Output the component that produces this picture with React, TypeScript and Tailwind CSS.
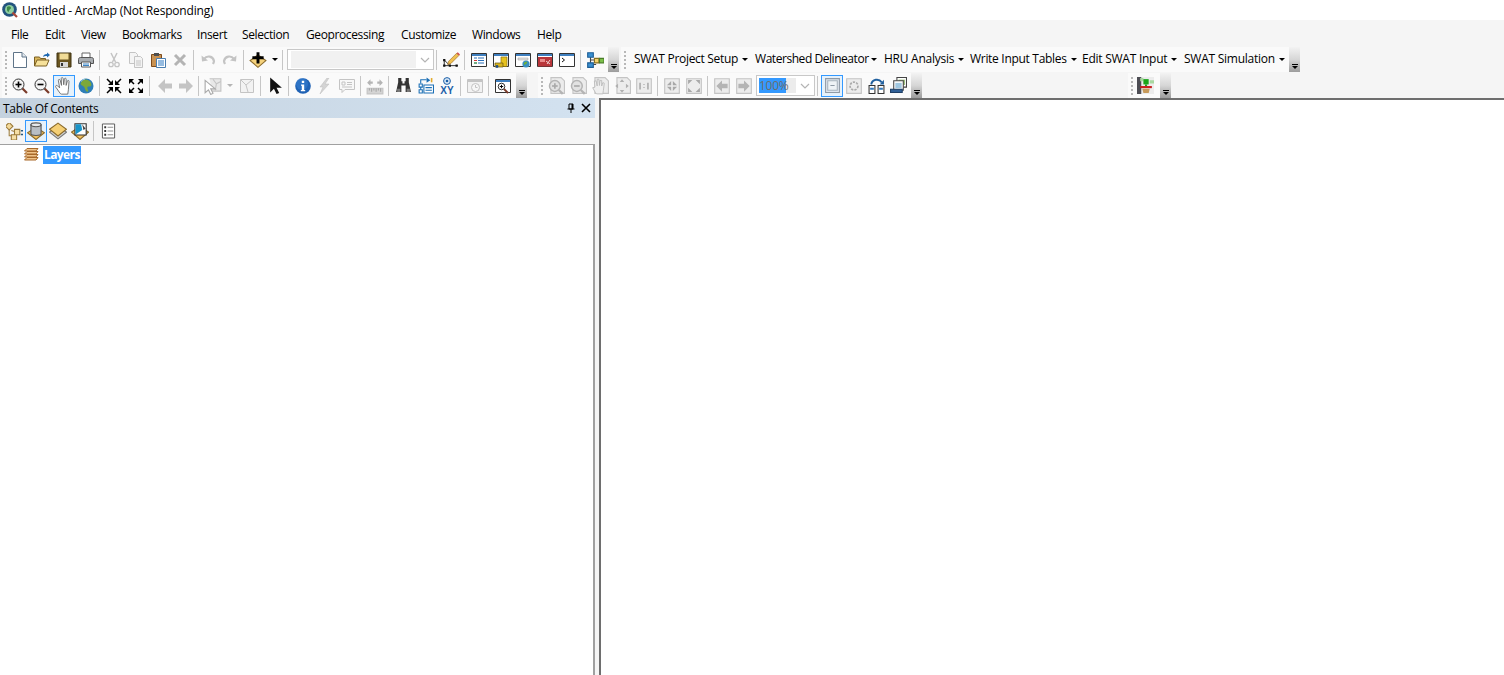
import type { ReactNode } from 'react';

const font = "font-['Open_Sans','Liberation_Sans',sans-serif]";

const menus = [
  { label: 'File', w: 'w-[34px]' },
  { label: 'Edit', w: 'w-[36px]' },
  { label: 'View', w: 'w-[41px]' },
  { label: 'Bookmarks', w: 'w-[75px]' },
  { label: 'Insert', w: 'w-[45px]' },
  { label: 'Selection', w: 'w-[64px]' },
  { label: 'Geoprocessing', w: 'w-[95px]' },
  { label: 'Customize', w: 'w-[71px]' },
  { label: 'Windows', w: 'w-[65px]' },
  { label: 'Help', w: 'w-[30px]' },
];

const swatMenus = [
  { label: 'SWAT Project Setup', w: 'w-[121px]', t: 'tracking-[-0.3px]', gap: 'gap-[4px]' },
  { label: 'Watershed Delineator', w: 'w-[129px]', t: 'tracking-[-0.45px]', gap: 'gap-[2px]' },
  { label: 'HRU Analysis', w: 'w-[86px]', t: 'tracking-[-0.25px]', gap: 'gap-[4px]' },
  { label: 'Write Input Tables', w: 'w-[112px]', t: 'tracking-[-0.3px]', gap: 'gap-[4px]' },
  { label: 'Edit SWAT Input', w: 'w-[102px]', t: 'tracking-[-0.25px]', gap: 'gap-[4px]' },
  { label: 'SWAT Simulation', w: 'w-[104px]', t: 'tracking-[-0.25px]', gap: 'gap-[4px]' },
];

function Ico({ children, size = 'w-[16px] h-[16px]' }: { children: ReactNode; size?: string }) {
  return (
    <svg viewBox="0 0 16 16" className={size} fill="none">
      {children}
    </svg>
  );
}

function Btn({ children, active, w = 'w-[22px]' }: { children: ReactNode; active?: boolean; w?: string }) {
  return (
    <div
      className={`${w} h-[22px] shrink-0 flex items-center justify-center ${
        active ? 'border border-[#3399ff] bg-[#e5f1fb]' : ''
      }`}
    >
      {children}
    </div>
  );
}

function Sep() {
  return (
    <div className="w-[6px] h-[22px] shrink-0 pl-[2px] flex items-center">
      <div className="w-px h-[20px] bg-[#c6c6c6]" />
    </div>
  );
}

function Grip({ w = 'w-[7px]' }: { w?: string }) {
  return (
    <div className={`${w} shrink-0 pl-[3px] flex flex-col gap-[2px]`}>
      <div className="w-[2px] h-[2px] bg-[#b8b8b8]" />
      <div className="w-[2px] h-[2px] bg-[#b8b8b8]" />
      <div className="w-[2px] h-[2px] bg-[#b8b8b8]" />
      <div className="w-[2px] h-[2px] bg-[#b8b8b8]" />
      <div className="w-[2px] h-[2px] bg-[#b8b8b8]" />
    </div>
  );
}

function Overflow() {
  return (
    <div className="w-[11px] h-[25px] shrink-0 bg-gradient-to-b from-[#f3f3f3] via-[#d6d6d6] to-[#9c9c9c] flex flex-col items-center justify-end pb-[3px]">
      <div className="w-[6px] h-px bg-black mb-px" />
      <svg viewBox="0 0 6 3" className="w-[6px] h-[3px]">
        <path d="M0 0h6L3 3z" fill="#000" />
      </svg>
    </div>
  );
}

function Caret({ color = '#000' }: { color?: string }) {
  return (
    <svg viewBox="0 0 6 3" className="w-[6px] h-[3px]">
      <path d="M0 0h6L3 3z" fill={color} />
    </svg>
  );
}

function Chevron() {
  return (
    <svg viewBox="0 0 10 6" className="w-[10px] h-[6px]">
      <path d="M1 1l4 4 4-4" stroke="#b4b4b4" strokeWidth="1.2" fill="none" />
    </svg>
  );
}

const G = '#c4c4c4';

function NewDoc() {
  return (
    <Ico>
      <path d="M1.500 .5h8.500l4.500 4.500v10.500h-13z" fill="#fff" stroke="#5f7488" />
      <path d="M10 .5v4.500h4.500" fill="#e3e9ef" stroke="#5f7488" />
    </Ico>
  );
}
function OpenFolder() {
  return (
    <Ico>
      <path d="M.5 14V5h5l1 1.500h5V9" fill="#d9b65c" stroke="#7a5f22" />
      <path d="M.5 14l2.500-6h12l-2.500 6z" fill="#f6e19a" stroke="#7a5f22" />
      <path d="M9 5c0-2 2-3 4-3V.5L16 3l-3 2.500V4c-2 0-3 0-4 1z" fill="#1f69b3" />
    </Ico>
  );
}
function Save() {
  return (
    <Ico>
      <path d="M1 1h14v14H1z" fill="#6a5520" stroke="#3f3210" />
      <path d="M3.500 1.500h9v6h-9z" fill="#f1dc97" />
      <path d="M4 10h8v5H4z" fill="#d8d8d8" />
      <path d="M5 11h2v3H5z" fill="#333" />
    </Ico>
  );
}
function Print() {
  return (
    <Ico>
      <path d="M4 1h8v5H4z" fill="#fff" stroke="#666" />
      <path d="M.5 7.500c0-1.500 1-2 2-2h11c1 0 2 .5 2 2v4h-15z" fill="#a9adb1" stroke="#555" />
      <path d="M3.500 10h9v5h-9z" fill="#fff" stroke="#555" />
      <path d="M5 12h6M5 13.500h6" stroke="#3b83c4" />
    </Ico>
  );
}
function Cut() {
  return (
    <Ico>
      <path d="M5 1l4.500 9M11 1L6.500 10" stroke={G} strokeWidth="1.500" />
      <circle cx="5" cy="12.500" r="2.200" stroke={G} strokeWidth="1.300" />
      <circle cx="11" cy="12.500" r="2.200" stroke={G} strokeWidth="1.300" />
    </Ico>
  );
}
function Copy() {
  return (
    <Ico>
      <path d="M1.500 .5h6l2 2v9h-8z" fill="#f4f4f4" stroke={G} />
      <path d="M6.500 4.500h6l2 2v9h-8z" fill="#f4f4f4" stroke={G} />
      <path d="M8 9h5M8 11h5M8 13h5" stroke={G} />
    </Ico>
  );
}
function Paste() {
  return (
    <Ico>
      <path d="M1.500 2.500h10v12h-10z" fill="#c99252" stroke="#7e4b1b" />
      <path d="M4 1h5v3H4z" fill="#4d4d4d" />
      <path d="M6.500 6.500h9v9h-9z" fill="#fff" stroke="#4a7eb0" />
      <path d="M8 9h6M8 11h6M8 13h6" stroke="#2d79c2" />
    </Ico>
  );
}
function Del() {
  return (
    <Ico>
      <path d="M3 3l10 10M13 3L3 13" stroke="#b4b4b4" strokeWidth="3" />
    </Ico>
  );
}
function Undo({ flip }: { flip?: boolean }) {
  return (
    <Ico>
      <g transform={flip ? 'matrix(-1 0 0 1 16 0)' : undefined}>
        <path d="M4 7c3-4 9-3 10 2 0 1-.5 2-1 3" stroke={G} strokeWidth="2.200" />
        <path d="M1.500 3.500l.5 6 6-1z" fill={G} />
      </g>
    </Ico>
  );
}
function AddData() {
  return (
    <Ico size="w-[18px] h-[18px]">
      <path d="M8 14.500L1 8.500l7-5 7 5z" fill="#f5d27c" stroke="#8a6a2a" />
      <path d="M6.700 1h2.600v3.700H13v2.600H9.300V11H6.700V7.300H3V4.700h3.700z" fill="#000" />
    </Ico>
  );
}
function Editor() {
  return (
    <Ico size="w-[18px] h-[18px]">
      <path d="M2 8l5 5h7M2 8v5h5" stroke="#222" strokeWidth="0.800" />
      <path d="M1 7h2v2H1zM1 12h2v2H1zM6 12h2v2H6zM12 12h2v2h-2z" fill="#111" />
      <path d="M6 9l7-7 2 2-7 7-3 1z" fill="#f0c050" stroke="#a0702a" strokeWidth="0.600" />
      <path d="M13 2l1-1 2 2-1 1z" fill="#d04a4a" />
    </Ico>
  );
}
function WinFrame({ children }: { children?: ReactNode }) {
  return (
    <>
      <path d="M.5 1.500h15v13H.5z" fill="#fff" stroke="#333" />
      <path d="M1 2h14v2H1z" fill="#3f7fbf" />
      {children}
    </>
  );
}
function TableWin() {
  return (
    <Ico>
      <WinFrame>
        <path d="M3 6h3M7 6h6M3 8.500h3M7 8.500h6M3 11h3M7 11h6" stroke="#2a6fb8" />
        <path d="M3 8.500h3" stroke="#d03a3a" />
        <path d="M3 11h3" stroke="#4aa02a" />
      </WinFrame>
    </Ico>
  );
}
function Catalog() {
  return (
    <Ico>
      <WinFrame>
        <path d="M8 5h6v9.500H8z" fill="#e6c21f" stroke="#8a7210" strokeWidth="0.700" />
        <path d="M2 11h8v4H2z" fill="#d8b520" stroke="#6a5810" strokeWidth="0.700" />
        <circle cx="4" cy="14.500" r="1.400" fill="#234f86" />
      </WinFrame>
    </Ico>
  );
}
function SearchWin() {
  return (
    <Ico>
      <WinFrame>
        <path d="M3 6h10v2H3z" fill="#e4e4e4" stroke="#999" strokeWidth="0.500" />
        <circle cx="11" cy="12" r="3.600" fill="#3a8fc0" />
        <path d="M9 11c1-1.500 2.500-1.500 3-1s0 1.500-1 2-1.500 1.500-2 .5z" fill="#6fb03a" />
      </WinFrame>
    </Ico>
  );
}
function Toolbox() {
  return (
    <Ico>
      <WinFrame>
        <path d="M1 5h14v9.500H1z" fill="#b8353a" />
        <path d="M3 7h5v3H3z" fill="#e88a8a" />
        <path d="M9 9l4 3M13 8l-3 4" stroke="#f0d0d0" />
      </WinFrame>
    </Ico>
  );
}
function Python() {
  return (
    <Ico>
      <WinFrame>
        <path d="M3 6l2.500 2L3 10" stroke="#111" />
      </WinFrame>
    </Ico>
  );
}
function Model() {
  return (
    <Ico size="w-[18px] h-[18px]">
      <path d="M4 5v7M4 8h5M4 12h5M11 8h2" stroke="#444" />
      <path d="M1.500 1.500h5v4h-5zM1.500 10.500h5v4h-5z" fill="#3a8fd0" stroke="#1f5f96" />
      <path d="M7.500 6.500h4v4h-4z" fill="#f3d36a" stroke="#8a7020" />
      <path d="M12 6.500h4v4h-4z" fill="#7cc04a" stroke="#4a7d28" />
    </Ico>
  );
}
function Magnifier({ plus, minus }: { plus?: boolean; minus?: boolean }) {
  return (
    <Ico>
      <path d="M10 10l5 5" stroke="#7a3b2a" strokeWidth="2.200" />
      <circle cx="6.500" cy="6.500" r="5.500" fill="#f4f4f4" stroke="#333" />
      {(plus || minus) && <path d="M3.500 6.500h6" stroke="#000" strokeWidth="1.600" />}
      {plus && <path d="M6.500 3.500v6" stroke="#000" strokeWidth="1.600" />}
    </Ico>
  );
}
function Hand() {
  return (
    <Ico size="w-[20px] h-[20px]">
      <path
        d="M5 14L1.500 9c-.8-1 .5-2 1.300-1.200L4.500 9.500 3.500 3.500c0-1 1.200-1 1.500 0l1 4-.2-5.500c0-1 1.400-1 1.500 0l.5 5 .5-4.500c.1-1 1.400-1 1.400 0v5l1-3.500c.3-.8 1.400-.5 1.300.4L11.500 11 11 14.500H6z"
        fill="#fff"
        stroke="#666"
        strokeWidth="0.700"
      />
    </Ico>
  );
}
function Globe() {
  return (
    <Ico>
      <circle cx="8" cy="8" r="7.500" fill="#2f7fb8" />
      <path d="M6 1.500c3-.5 6 1 7 3.500s0 4-2 3.500S9 10 10 12s-1 2-2 1-1-4-3-5-3-2-2-3.500 2-2 3-3z" fill="#7da83a" />
      <path d="M3 3.500A7 7 0 0 1 7 1" stroke="#9ccbe8" />
    </Ico>
  );
}
function FixedIn() {
  return (
    <Ico>
      <path d="M1 1l5 5M15 1l-5 5M1 15l5-5M15 15l-5-5" stroke="#000" strokeWidth="1.500" />
      <path d="M7 7V2L2 7zM9 7V2l5 5zM7 9v5L2 9zM9 9v5l5-5z" fill="#000" />
    </Ico>
  );
}
function FixedOut() {
  return (
    <Ico>
      <path d="M6 6L2 2M10 6l4-4M6 10l-4 4M10 10l4 4" stroke="#000" strokeWidth="1.500" />
      <path d="M1 1h5L1 6zM15 1h-5l5 5zM1 15h5l-5-5zM15 15h-5l5-5z" fill="#000" />
    </Ico>
  );
}
function BackArrow({ flip }: { flip?: boolean }) {
  return (
    <Ico>
      <path d={flip ? 'M1 5.500h7V1l7 7-7 7v-4.500H1z' : 'M15 5.500H8V1L1 8l7 7v-4.500h7z'} fill={G} />
    </Ico>
  );
}
function SelectFeat() {
  return (
    <Ico size="w-[18px] h-[18px]">
      <path d="M5 1.500h10v11H7" fill="#e8e8e8" stroke={G} />
      <path d="M8 2l3 4 4-2M11 6l-1 6" stroke={G} />
      <path d="M1 3v11l3-2.500 2 4 2-1-2-4h4z" fill="#fff" stroke="#aaa" />
    </Ico>
  );
}
function ClearSel() {
  return (
    <Ico>
      <path d="M1.500 1.500h13v13h-13z" fill="#f2f2f2" stroke={G} />
      <path d="M2 2l5 5 6-5M7 7l2 7" stroke={G} />
    </Ico>
  );
}
function Cursor() {
  return (
    <Ico size="w-[17px] h-[17px]">
      <path d="M3 .5v14l3.500-3.500 2.500 5 2.500-1-2.500-5h5z" fill="#111" />
    </Ico>
  );
}
function Info() {
  return (
    <Ico>
      <circle cx="8" cy="8" r="7.800" fill="#1f62b5" />
      <circle cx="7" cy="6" r="6" fill="#3b83d6" opacity=".5" />
      <path d="M6.800 2.800h2.400v2.200H6.800zM6 6.500h3.200v5.500h1v1.300H5.800V12h1V7.800H6z" fill="#fff" />
    </Ico>
  );
}
function Flash() {
  return (
    <Ico>
      <path d="M10 0L3 9h3l-3 7 9-10H8l4-6z" fill="#d4d4d4" stroke="#bdbdbd" strokeWidth="0.500" />
    </Ico>
  );
}
function Popup() {
  return (
    <Ico>
      <path d="M.5 1.500h15v10H6l-3 3v-3H.5z" fill="#f8f8f8" stroke={G} />
      <path d="M3 4h3v3H3zM8 4.500h5M8 6.500h5M3 9h10" stroke={G} />
    </Ico>
  );
}
function Measure() {
  return (
    <Ico size="w-[18px] h-[18px]">
      <path d="M1 10h14v5H1z" fill="#d4d4d4" stroke={G} />
      <path d="M3 10v2M5 10v3M7 10v2M9 10v3M11 10v2M13 10v3" stroke="#a8a8a8" />
      <path d="M1 5l3-3v2h2v2H4v2zM15 5l-3-3v2h-2v2h2v2z" fill="#b4b4b4" />
    </Ico>
  );
}
function Binoc() {
  return (
    <Ico size="w-[17px] h-[17px]">
      <path d="M3 1h3v3h1v2h2V4h1V1h3v4l2 9H10V8H6v6H1l2-9z" fill="#333" />
      <path d="M2 11h3v3H2zM11 11h3v3h-3z" fill="#777" />
    </Ico>
  );
}
function GoTo() {
  return (
    <Ico size="w-[17px] h-[17px]">
      <path d="M2 6.500h3v3H2zM2 12h3v3H2z" fill="#fff" stroke="#1b6fb5" />
      <path d="M3.500 6V2.500H9M3.500 9.500V12" stroke="#1b6fb5" />
      <path d="M6.500 7.500h9v7.500h-9z" fill="#fff" stroke="#1b6fb5" />
      <path d="M8 10h6M8 12.500h6" stroke="#1b6fb5" />
      <path d="M9 .5l3.500 2.500L9 5.500z" fill="#1b6fb5" />
      <path d="M13 1h1.500v4H13z" fill="#e0a92a" />
    </Ico>
  );
}
function XY() {
  return (
    <div className="flex flex-col items-center leading-none">
      <svg viewBox="0 0 8 8" className="w-[8px] h-[8px] mb-[1px]">
        <circle cx="4" cy="4" r="3.400" stroke="#1b5fa8" fill="#dbe9f6" />
        <circle cx="4" cy="4" r="1.300" fill="#1b5fa8" />
      </svg>
      <span className="text-[10px] leading-[9px] font-bold text-[#1b5fa8] font-['Liberation_Sans',sans-serif]">XY</span>
    </div>
  );
}
function TimeWin() {
  return (
    <Ico>
      <path d="M.5 1.500h15v13H.5z" fill="#f2f2f2" stroke={G} />
      <path d="M1 2h14v2H1z" fill={G} />
      <circle cx="8.500" cy="9.500" r="4" fill="#f7f7f7" stroke={G} />
      <path d="M8.500 7v2.500h2" stroke={G} />
    </Ico>
  );
}
function Viewer() {
  return (
    <Ico>
      <WinFrame>
        <circle cx="6.500" cy="8.500" r="3.300" fill="#fff" stroke="#333" />
        <path d="M4.800 8.500h3.400M6.500 6.800v3.400" stroke="#000" />
        <path d="M9 11l4 4" stroke="#7a3b2a" strokeWidth="1.800" />
      </WinFrame>
    </Ico>
  );
}
function PageTool({ children }: { children?: ReactNode }) {
  return (
    <Ico size="w-[18px] h-[18px]">
      <path d="M3.500 .5h9l3 3v11h-12z" fill="#ececec" stroke={G} />
      {children}
    </Ico>
  );
}
function PageZoom({ plus }: { plus?: boolean }) {
  return (
    <PageTool>
      <circle cx="7" cy="8" r="4.800" fill="#e2e2e2" stroke="#b4b4b4" strokeWidth="1.300" />
      <path d="M4.500 8h5" stroke="#aaa" strokeWidth="1.500" />
      {plus && <path d="M7 5.500v5" stroke="#aaa" strokeWidth="1.500" />}
      <path d="M10.500 11.500l3.500 3.500" stroke="#b4b4b4" strokeWidth="2" />
    </PageTool>
  );
}
function PageHand() {
  return (
    <PageTool>
      <path d="M4 14L1.500 9.500 3.500 9 3 3.500h1.500L5.500 8 5.500 2H7l.5 5.500L8 3h1.500v5l1-3 1.300.5L11 12l-.5 3H5z" fill="#efefef" stroke="#bbb" strokeWidth="0.800" />
    </PageTool>
  );
}
function PageFull() {
  return (
    <PageTool>
      <path d="M8 2l2 2.500H6zM8 14l2-2.500H6zM2 8l2.500-2v4zM14 8l-2.500-2v4z" fill="#b0b0b0" />
    </PageTool>
  );
}
function Page11() {
  return (
    <Ico size="w-[18px] h-[18px]">
      <path d="M1.500 1.500h13v13h-13z" fill="#ececec" stroke={G} />
      <path d="M4.500 5v6M11.500 5v6M8 6.500v.7M8 9v.7" stroke="#aaa" strokeWidth="1.400" />
    </Ico>
  );
}
function PageFixed({ out }: { out?: boolean }) {
  return (
    <Ico size="w-[18px] h-[18px]">
      <path d="M1.500 1.500h13v13h-13z" fill="#ececec" stroke={G} />
      <g transform="translate(2 2) scale(.75)">
        {out ? (
          <path d="M1 1h5L1 6zM15 1h-5l5 5zM1 15h5l-5-5zM15 15h-5l5-5z" fill="#a8a8a8" />
        ) : (
          <path d="M7 7V2L2 7zM9 7V2l5 5zM7 9v5L2 9zM9 9v5l5-5z" fill="#a8a8a8" />
        )}
      </g>
    </Ico>
  );
}
function PageArrow({ flip }: { flip?: boolean }) {
  return (
    <Ico size="w-[18px] h-[18px]">
      <path d="M1.500 1.500h13v13h-13z" fill="#ececec" stroke={G} />
      <path d={flip ? 'M3 6h5V3l5 5-5 5v-3H3z' : 'M13 6H8V3L3 8l5 5v-3h5z'} fill="#b4b4b4" />
    </Ico>
  );
}
function LayoutView() {
  return (
    <Ico size="w-[17px] h-[17px]">
      <path d="M1.500 1.500h13v13h-13z" fill="#dfe6ee" stroke="#8f9aa5" />
      <path d="M3.500 3.500h9v9h-9z" fill="#eef2f6" stroke="#a8b2bc" />
      <path d="M6 8h4" stroke="#8f9aa5" />
    </Ico>
  );
}
function RefreshPage() {
  return (
    <Ico size="w-[18px] h-[18px]">
      <path d="M1.500 1.500h13v13h-13z" fill="#ececec" stroke={G} />
      <circle cx="8" cy="8" r="3.500" stroke="#aaa" strokeWidth="1.500" strokeDasharray="2 1" />
    </Ico>
  );
}
function ChangeLayout() {
  return (
    <Ico size="w-[17px] h-[17px]">
      <path d="M1 8h5.500v7.500H1zM9.500 8H15v7.500H9.500z" fill="#fff" stroke="#333" />
      <path d="M2 10h3.500v2H2zM10.500 10H14v2h-3.500z" fill="#2f78bd" />
      <path d="M3 7c1-5 7-6 10-2" stroke="#1f5f9e" strokeWidth="1.800" />
      <path d="M15 2.500V7h-4z" fill="#1f5f9e" />
    </Ico>
  );
}
function Pages() {
  return (
    <Ico size="w-[17px] h-[17px]">
      <path d="M6.500 .5h9v9h-9z" fill="#fff" stroke="#444" />
      <path d="M8 2.500h6v5H8z" fill="#8fb86a" />
      <path d="M3.500 3.500h9v9h-9z" fill="#fff" stroke="#444" />
      <path d="M5 5.500h6v5H5z" fill="#a0c7e0" />
      <path d="M.5 11.500h11v3H.5z" fill="#2f5f96" stroke="#1f3f66" />
    </Ico>
  );
}
function SwatIcon() {
  return (
    <Ico size="w-[17px] h-[17px]">
      <path d="M0 0h16v16H0z" fill="#ececec" />
      <path d="M0 0h4v16H0z" fill="#26262e" opacity=".8" />
      <path d="M3 1h3v3H3zM12 3h4v3h-4z" fill="#a8d8a0" />
      <path d="M6 2h5v5H6z" fill="#19a519" />
      <path d="M7.500 7h2v2h-2z" fill="#19a519" />
      <path d="M3 8.500h11v2H3z" fill="#c81e1e" />
      <path d="M5 11h7l-1 4H6z" fill="#c79a5a" />
    </Ico>
  );
}
function ListOrder() {
  return (
    <Ico size="w-[17px] h-[17px]">
      <path d="M3 4v8h5M5 7l3 1" stroke="#a08040" />
      <path d="M.5 .5h5v5h-5z" fill="#f3d99a" stroke="#9a7a3a" transform="rotate(45 3 3)" />
      <path d="M8 6h5v5H8zM5 11h5v5H5z" fill="#f5dfa6" stroke="#9a7a3a" />
      <path d="M14 6.500h2v1.500h-2zM14 10h2v1.500h-2z" fill="#26587f" />
    </Ico>
  );
}
function ListSource() {
  return (
    <Ico size="w-[18px] h-[18px]">
      <path d="M.5 9.500L8 15.500l7.500-6-3-2h-9z" fill="#f0c060" stroke="#8a6a2a" />
      <path d="M3.500 2.500v8c0 2 9 2 9 0v-8z" fill="#b8bec4" stroke="#555" />
      <ellipse cx="8" cy="2.500" rx="4.500" ry="1.700" fill="#e6e9ec" stroke="#555" />
    </Ico>
  );
}
function ListVis() {
  return (
    <Ico size="w-[18px] h-[18px]">
      <path d="M.5 9L8 15l7.500-6-3-2h-9z" fill="#d0d0d0" stroke="#777" />
      <path d="M.5 6.500L8 1l7.500 5.500L8 12.500z" fill="#f5cf74" stroke="#8a6a2a" />
    </Ico>
  );
}
function ListSel() {
  return (
    <Ico size="w-[18px] h-[18px]">
      <path d="M.5 9L8 15.500 15.500 9l-3-2h-9z" fill="#f0c060" stroke="#8a6a2a" />
      <path d="M3.500 1.500h10v10h-10z" fill="#fff" stroke="#333" />
      <path d="M4 2h5l1 5-6 4z" fill="#1a94c8" />
      <path d="M10 2l3 4-2 1z" fill="#444" />
    </Ico>
  );
}
function Options() {
  return (
    <Ico size="w-[15px] h-[16px]">
      <path d="M1.500 .5h13v15h-13z" fill="#fff" stroke="#555" />
      <path d="M3.500 3h2v2h-2zM3.500 7h2v2h-2zM3.500 11h2v2h-2z" fill="#333" />
      <path d="M7 4h6M7 8h6M7 12h6" stroke="#8a8a8a" />
    </Ico>
  );
}
function LayersStack() {
  return (
    <Ico>
      <path d="M4 1.500h11l-2 2.500H1.500z" fill="#f0c48a" stroke="#a8692a" />
      <path d="M4 4.500h11l-2 2.500H1.500z" fill="#f0c48a" stroke="#a8692a" />
      <path d="M4 7.500h11l-2 2.500H1.500z" fill="#f0c48a" stroke="#a8692a" />
      <path d="M4 10.500h11l-2 2.500H1.500z" fill="#f0c48a" stroke="#a8692a" />
    </Ico>
  );
}

function Band({ children, className = '' }: { children: ReactNode; className?: string }) {
  return (
    <div className={`h-[25px] mt-px shrink-0 bg-[#fafafa] flex items-center ${className}`}>{children}</div>
  );
}

export default function App() {
  return (
    <div className={`w-[1504px] h-[675px] overflow-hidden flex flex-col bg-white text-black text-[12px] ${font}`}>
      {/* title bar */}
      <div className="h-[20px] shrink-0 flex items-center pl-[2px] gap-[4px] bg-white">
        <svg viewBox="0 0 16 16" className="w-[16px] h-[16px]">
          <circle cx="7.500" cy="7.500" r="7.300" fill="#23547f" />
          <circle cx="7.500" cy="7.500" r="4.500" fill="#8fcfa0" />
          <path d="M5 5c2-1.500 4-.5 4 1s-2 1-2 3-2 0-2-1z" fill="#3d8a4a" />
          <path d="M10.500 10.500l4.500 4.500" stroke="#a8483a" strokeWidth="2.200" />
        </svg>
        <span className="tracking-[-0.19px] leading-none pt-px">Untitled - ArcMap (Not Responding)</span>
      </div>

      {/* menu + toolbars */}
      <div className="h-[78px] shrink-0 bg-[#f5f5f5] flex flex-col">
        <div className="h-[26px] shrink-0 flex items-center pl-[11px] pt-[3px] tracking-[-0.38px]">
          {menus.map((m) => (
            <span key={m.label} className={`${m.w} shrink-0`}>
              {m.label}
            </span>
          ))}
        </div>

        <div className="h-[26px] shrink-0 flex items-start pl-[2px]">
          <Band>
            <Grip />
            <Btn><NewDoc /></Btn>
            <Btn><OpenFolder /></Btn>
            <Btn><Save /></Btn>
            <Btn><Print /></Btn>
            <Sep />
            <Btn><Cut /></Btn>
            <Btn><Copy /></Btn>
            <Btn><Paste /></Btn>
            <Btn><Del /></Btn>
            <Sep />
            <Btn><Undo /></Btn>
            <Btn><Undo flip /></Btn>
            <Sep />
            <Btn><AddData /></Btn>
            <div className="w-[11px] flex justify-center"><Caret /></div>
            <Sep />
            <div className="w-[147px] h-[21px] ml-px shrink-0 bg-white border border-[#c8c8c8] flex items-center pl-[3px]">
              <div className="w-[125px] h-[17px] bg-[#f1f1f1]" />
              <div className="flex-1 flex justify-center"><Chevron /></div>
            </div>
            <Sep />
            <Btn><Editor /></Btn>
            <Sep />
            <Btn><TableWin /></Btn>
            <Btn><Catalog /></Btn>
            <Btn><SearchWin /></Btn>
            <Btn><Toolbox /></Btn>
            <Btn><Python /></Btn>
            <Sep />
            <Btn><Model /></Btn>
            <div className="w-[2px]" />
          </Band>
          <div className="mt-px"><Overflow /></div>
          <Band className="ml-[2px] w-[668px]">
            <Grip />
            <div className="w-[6px] shrink-0" />
            {swatMenus.map((m) => (
              <div key={m.label} className={`${m.w} ${m.gap} ${m.t} shrink-0 flex items-center whitespace-nowrap pb-[2px]`}>
                <span>{m.label}</span>
                <div className="pt-[2px] flex"><Caret /></div>
              </div>
            ))}
          </Band>
          <div className="mt-px"><Overflow /></div>
        </div>

        <div className="h-[26px] shrink-0 flex items-start pl-[2px]">
          <Band>
            <Grip />
            <Btn><Magnifier plus /></Btn>
            <Btn><Magnifier minus /></Btn>
            <Btn active><Hand /></Btn>
            <Btn><Globe /></Btn>
            <Sep />
            <Btn><FixedIn /></Btn>
            <Btn><FixedOut /></Btn>
            <Sep />
            <div className="w-px" />
            <Btn w="w-[21px]"><BackArrow /></Btn>
            <Btn w="w-[21px]"><BackArrow flip /></Btn>
            <Sep />
            <Btn><SelectFeat /></Btn>
            <div className="w-[12px] flex justify-center"><Caret color="#b4b4b4" /></div>
            <Btn><ClearSel /></Btn>
            <Sep />
            <Btn><Cursor /></Btn>
            <Sep />
            <Btn><Info /></Btn>
            <Btn><Flash /></Btn>
            <Btn><Popup /></Btn>
            <Sep />
            <Btn><Measure /></Btn>
            <Sep />
            <Btn><Binoc /></Btn>
            <Btn><GoTo /></Btn>
            <Btn><XY /></Btn>
            <Sep />
            <Btn><TimeWin /></Btn>
            <Sep />
            <Btn><Viewer /></Btn>
            <div className="w-[2px]" />
          </Band>
          <div className="mt-px"><Overflow /></div>
          <Band className="ml-[11px]">
            <Grip />
            <Btn><PageZoom plus /></Btn>
            <Btn><PageZoom /></Btn>
            <Btn><PageHand /></Btn>
            <Btn><PageFull /></Btn>
            <Btn><Page11 /></Btn>
            <Sep />
            <Btn><PageFixed /></Btn>
            <Btn><PageFixed out /></Btn>
            <Sep />
            <Btn><PageArrow /></Btn>
            <Btn><PageArrow flip /></Btn>
            <div className="w-[59px] h-[21px] ml-px shrink-0 bg-white border border-[#c8c8c8] flex items-center pl-[2px]">
              <div className="w-[37px] h-[15px] bg-[#ececec] flex">
                <span className="w-[27px] bg-[#3399ff] text-[#6d6d6d] leading-[15px] tracking-[-0.25px]">100%</span>
              </div>
              <div className="flex-1 flex justify-center"><Chevron /></div>
            </div>
            <Sep />
            <Btn active><LayoutView /></Btn>
            <Btn><RefreshPage /></Btn>
            <Btn><ChangeLayout /></Btn>
            <Btn><Pages /></Btn>
            <div className="w-[2px]" />
          </Band>
          <div className="mt-px"><Overflow /></div>
          <Band className="ml-[206px]">
            <Grip w="w-[6px]" />
            <Btn><SwatIcon /></Btn>
            <div className="w-[4px]" />
          </Band>
          <div className="mt-px"><Overflow /></div>
        </div>
      </div>

      {/* panel + map */}
      <div className="flex-1 flex min-h-0">
        <div className="w-[599px] shrink-0 flex flex-col bg-[#f5f5f5]">
          <div className="w-[595px] h-[20px] shrink-0 bg-gradient-to-r from-[#c4d2df] to-[#d3e2f0] flex items-center pl-[3px] pr-[4px] pt-[2px] tracking-[-0.3px]">
            <span className="flex-1">Table Of Contents</span>
            <svg viewBox="0 0 10 10" className="w-[10px] h-[10px] mr-[5px] -mt-[2px]">
              <path d="M3 1h4v5H3zM1.500 6h7M5 6v4" stroke="#000" fill="none" />
              <path d="M5.500 1h1.500v5H5.500z" fill="#000" />
            </svg>
            <svg viewBox="0 0 10 10" className="w-[10px] h-[10px] -mt-[2px]">
              <path d="M1 1l8 8M9 1l-8 8" stroke="#000" strokeWidth="1.600" />
            </svg>
          </div>
          <div className="w-[593px] h-[26px] shrink-0 flex items-center pl-[3px]">
            <Btn><ListOrder /></Btn>
            <Btn active><ListSource /></Btn>
            <Btn><ListVis /></Btn>
            <Btn><ListSel /></Btn>
            <Sep />
            <Btn><Options /></Btn>
          </div>
          <div className="w-[595px] flex-1 bg-white border-t border-r-2 border-[#a0a0a0]">
            <div className="h-[20px] pl-[23px] flex items-center gap-[4px]">
              <LayersStack />
              <span className="h-[18px] px-px bg-[#3399ff] text-white font-bold leading-[18px] tracking-[-0.6px]">Layers</span>
            </div>
          </div>
        </div>
        <div className="flex-1 bg-white border-l-2 border-t-2 border-[#6e6e6e]" />
      </div>
    </div>
  );
}
